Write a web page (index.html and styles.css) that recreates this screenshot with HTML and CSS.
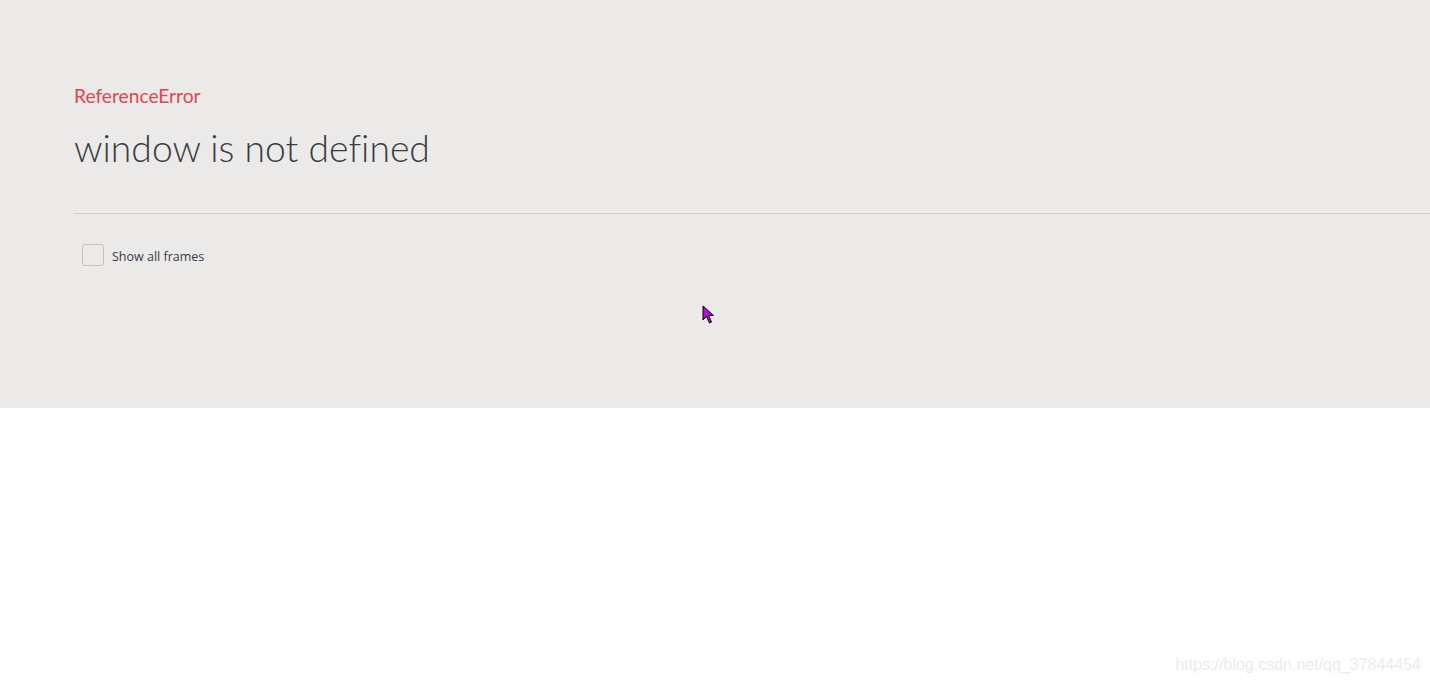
FILE: index.html
```html
<!DOCTYPE html>
<html>
<head>
<meta charset="utf-8">
<link rel="stylesheet" href="styles.css">
</head>
<body>
<div class="error-page">
  <div class="header">
    <div class="error-type">ReferenceError</div>
    <h1 class="error-msg">window is not defined</h1>
  </div>
  <div class="frames">
    <label class="toggle">
      <span class="box"></span>
      <span class="toggle-label">Show all frames</span>
    </label>
  </div>
  <svg class="cursor" width="14" height="20" viewBox="0 0 14 20">
    <path d="M1 1 L1 15 L4.5 11.5 L7.5 18 L9.5 17 L6.5 10.5 L11.5 10.5 Z" fill="#b40fd8" stroke="#000" stroke-width="1"/>
  </svg>
</div>
<div class="watermark">https://blog.csdn.net/qq_37844454</div>
</body>
</html>
```
FILE: styles.css
```css
html, body {
  margin: 0;
  padding: 0;
  background: #fff;
}
body {
  font-family: "Open Sans", sans-serif;
  height: 683px;
  position: relative;
  overflow: hidden;
}
.error-page {
  position: relative;
  background: #eceae8;
  height: 408px;
  padding-left: 74px;
  box-sizing: border-box;
}
.header {
  padding-top: 84px;
  border-bottom: 1px solid #cfcdcb;
  padding-bottom: 41px;
}
.error-type {
  color: #e0454d;
  font-family: "Lato", sans-serif;
  font-size: 19.2px;
  line-height: 24px;
}
.error-msg {
  margin: 16px 0 0 0;
  font-family: "Lato", sans-serif;
  font-weight: 300;
  font-size: 37.3px;
  line-height: 48px;
  color: #3b3b45;
  font-variant-ligatures: none;
}
.frames {
  padding: 30px 0 0 8px;
}
.toggle {
  display: flex;
  align-items: center;
  gap: 8px;
}
.box {
  width: 20px;
  height: 20px;
  border: 1px solid #c4c2c0;
  border-radius: 3px;
  background: #eceae8;
}
.toggle-label {
  font-family: "Open Sans", sans-serif;
  font-size: 12.5px;
  color: #3a3a4a;
  padding-top: 2px;
}
.cursor {
  position: absolute;
  left: 702px;
  top: 305px;
}
.watermark {
  position: absolute;
  right: 9px;
  top: 656px;
  font-family: "Liberation Sans", sans-serif;
  font-size: 16px;
  color: #ebebeb;
}
```
